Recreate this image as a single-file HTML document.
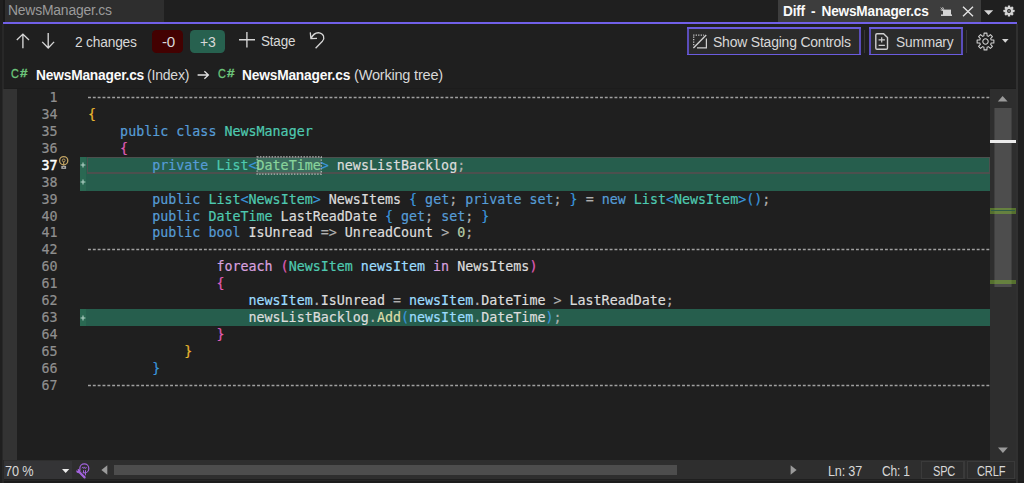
<!DOCTYPE html>
<html><head><meta charset="utf-8"><title>Diff - NewsManager.cs</title>
<style>
html,body{margin:0;padding:0;}
body{width:1024px;height:483px;overflow:hidden;background:#1f1f1f;position:relative;font-family:"Liberation Sans",sans-serif;color:#e6e6e6;}
.abs{position:absolute;}
svg{display:block;overflow:visible;}
.t{position:absolute;white-space:pre;line-height:1;}
.ui{font-family:"Liberation Sans",sans-serif;font-size:14px;color:#d8d8d8;letter-spacing:-0.2px;}
.b{font-weight:bold;}
.cs{color:#6cc47a;-webkit-text-stroke:0.3px;font-family:"Liberation Sans",sans-serif;}
.ln{position:absolute;left:0;width:990px;height:17px;font-family:"DejaVu Sans Mono","Liberation Mono",monospace;font-size:13.34px;line-height:17px;white-space:pre;color:#dcdcdc;-webkit-text-stroke:0.2px;}
.ln .n{position:absolute;left:20px;width:37.5px;text-align:right;color:#8f8f8f;}
.ln .n.cur{color:#ffffff;-webkit-text-stroke:0.45px #ffffff;}
.ln .c{position:absolute;left:88px;top:0;}
.k{color:#569cd6}.ty{color:#4ec9b0}.v{color:#9cdcfe}.ct{color:#d8a0df}.m{color:#dcdcaa}
.y{color:#e8b730}.mg{color:#e05cb8}.bl{color:#3a96dd}.num{color:#b5cea8}.op{color:#b0b0b0}
.sel{color:#88d49c}
.dash{position:absolute;left:88px;}
.btn{background:#5a4dba;}
.btn i{position:absolute;left:0;right:0;top:0;bottom:0;border-top:0;background:linear-gradient(#6b5ce0,#6b5ce0) top/100% 1.9px no-repeat,linear-gradient(#6b5ce0,#6b5ce0) bottom/100% 1.9px no-repeat;}
.btn b{position:absolute;left:1.9px;right:1.9px;top:1.9px;bottom:1.9px;background:#2b2b2b;}
</style></head><body>

<!-- window edges -->
<div class="abs" style="left:3px;top:0;width:1.8px;height:21.6px;background:#191919"></div>
<div class="abs" style="left:2.2px;top:24.2px;width:1.8px;height:459px;background:#282828"></div>

<!-- tab strip -->
<div class="abs" style="left:4.6px;top:0;width:159px;height:21.6px;background:#2e2e2e"></div>
<div class="t ui" id="t1" style="left:8.00px;top:2.50px;transform:scaleX(0.9927);transform-origin:0 0;color:#9b9b9b">NewsManager.cs</div>
<div class="abs" style="left:778px;top:0;width:203px;height:22px;background:#3d3d3d"></div>
<div class="t ui b" id="t2" style="left:783.00px;top:4.00px;transform:scaleX(0.9734);transform-origin:0 0;color:#fafafa;word-spacing:2.6px">Diff - NewsManager.cs</div>
<!-- pin -->
<svg class="abs" style="left:939px;top:5px" width="16" height="13" viewBox="0 0 16 13"><path d="M4 4.6H12V10H4Z" fill="#d6d6d6"/><path d="M2 10.2H13" stroke="#d6d6d6" stroke-width="1.5"/><path d="M1.8 2.6L4.6 5.6M3.6 2.2L4.8 4.6M1.6 4.8L4 5.6" stroke="#d6d6d6" stroke-width="0.9"/></svg>
<!-- close X -->
<svg class="abs" style="left:962px;top:6px" width="12" height="11" viewBox="0 0 12 11"><path d="M1 0.8L11 10.2M11 0.8L1 10.2" stroke="#e4e4e4" stroke-width="1.35" fill="none"/></svg>
<!-- tab dropdown -->
<svg class="abs" style="left:984px;top:10px" width="10" height="6" viewBox="0 0 10 6"><path d="M0 0.2H9.2L4.6 5Z" fill="#d4d4d4"/></svg>
<!-- tab gear (filled) -->
<svg class="abs" style="left:1003.3px;top:4.5px" width="12" height="12" viewBox="-6.5 -6.5 13 13"><g fill="#d4d4d4"><circle r="4.3"/><g id="tg"><rect x="-1.3" y="-6" width="2.6" height="12" rx="0.4"/><rect x="-1.3" y="-6" width="2.6" height="12" rx="0.4" transform="rotate(45)"/><rect x="-1.3" y="-6" width="2.6" height="12" rx="0.4" transform="rotate(90)"/><rect x="-1.3" y="-6" width="2.6" height="12" rx="0.4" transform="rotate(135)"/></g></g><circle r="2.1" fill="#1f1f1f"/><circle r="0.8" fill="#d4d4d4"/></svg>
<div class="abs" style="left:3.1px;top:21.5px;width:1013.5px;height:2.6px;background:#7160e8"></div>

<!-- toolbar left -->
<svg class="abs" style="left:14px;top:30px" width="44" height="22" viewBox="14 30 44 22"><g stroke="#d6d6d6" stroke-width="1.35" fill="none"><path d="M22.9 34.3V48.2M16.8 40.1L22.9 34.1L29 40.1"/><path d="M48.2 33V47.8M42.2 41.9L48.2 48L54.1 41.9"/></g></svg>
<div class="t ui" id="t3" style="left:75.00px;top:35.00px;transform:scaleX(0.9830);transform-origin:0 0;">2 changes</div>
<div class="abs" style="left:152px;top:30px;width:31px;height:23px;border-radius:4.5px;background:#430101"></div>
<div class="t ui" id="t4" style="left:162.00px;top:35.00px;transform:scaleX(1.0812);transform-origin:0 0;">-0</div>
<div class="abs" style="left:190px;top:30px;width:35px;height:23px;border-radius:4.5px;background:#27614f"></div>
<div class="t ui" id="t5" style="left:200.00px;top:35.00px;transform:scaleX(1.0000);transform-origin:0 0;">+3</div>
<svg class="abs" style="left:238px;top:31px" width="18" height="18" viewBox="238 31 18 18"><path d="M239 39.7H255M246.9 32V47.6" stroke="#d6d6d6" stroke-width="1.35" fill="none"/></svg>
<div class="t ui" id="t6" style="left:261.00px;top:34.00px;transform:scaleX(0.9624);transform-origin:0 0;">Stage</div>
<svg class="abs" style="left:308px;top:30px" width="20" height="20" viewBox="308 30 20 20"><path d="M310.3 32.4L310.9 38.7L317 38.3M310.9 38.7C312.6 35 316 32.4 319.3 32.8C323.6 33.4 325.2 37.8 322.4 41.2L315.6 48.2" stroke="#d6d6d6" stroke-width="1.3" fill="none" stroke-linejoin="round"/></svg>

<!-- toolbar right -->
<div class="abs btn" style="left:687.2px;top:27.1px;width:173.8px;height:28.4px"><i></i><b></b></div>
<svg class="abs" style="left:692px;top:33px" width="16" height="16" viewBox="692 33 16 16"><g stroke="#d0d0d0" fill="none"><path d="M693.4 48L706.2 35" stroke-width="1.35"/><path d="M706.4 38.4V47.8H697" stroke-width="1.2"/><path d="M693.2 35.2H704" stroke-width="1.2" stroke-dasharray="1.2 1.3"/><path d="M693.7 36.5V45.5" stroke-width="1.2" stroke-dasharray="1.2 1.3"/></g></svg>
<div class="t ui" id="t7" style="left:713.00px;top:35.00px;transform:scaleX(0.9967);transform-origin:0 0;">Show Staging Controls</div>
<div class="abs" style="left:863.5px;top:29.8px;width:1.8px;height:23.4px;background:#383838"></div>
<div class="abs btn" style="left:869.2px;top:27.1px;width:93.5px;height:28.4px"><i></i><b></b></div>
<svg class="abs" style="left:874px;top:32px" width="16" height="19" viewBox="874 32 16 19"><g stroke="#cfcfcf" fill="none"><path d="M877 33.7H883.6L887.5 37.6V48A1.2 1.2 0 0 1 886.3 49.2H877A1.2 1.2 0 0 1 875.8 48V34.9A1.2 1.2 0 0 1 877 33.7Z" stroke-width="1.4"/><path d="M878.6 39.9H884.9M881.7 37.2V42.6M878.6 45.4H884.9" stroke-width="1.2"/></g></svg>
<div class="t ui" id="t8" style="left:896.00px;top:35.00px;transform:scaleX(0.9818);transform-origin:0 0;">Summary</div>
<div class="abs" style="left:965.7px;top:29.8px;width:1.8px;height:23.4px;background:#383838"></div>
<!-- gear outline -->
<svg class="abs" style="left:976px;top:32px" width="19" height="19" viewBox="-9.5 -9.5 19 19"><path d="M-1.57 -5.69L-1.44 -8.38L1.44 -8.38L1.57 -5.69L2.91 -5.13L4.91 -6.94L6.94 -4.91L5.13 -2.91L5.69 -1.57L8.38 -1.44L8.38 1.44L5.69 1.57L5.13 2.91L6.94 4.91L4.91 6.94L2.91 5.13L1.57 5.69L1.44 8.38L-1.44 8.38L-1.57 5.69L-2.91 5.13L-4.91 6.94L-6.94 4.91L-5.13 2.91L-5.69 1.57L-8.38 1.44L-8.38 -1.44L-5.69 -1.57L-5.13 -2.91L-6.94 -4.91L-4.91 -6.94L-2.91 -5.13Z" stroke="#d0d0d0" stroke-width="1.05" fill="none" stroke-linejoin="round"/><circle r="2.7" stroke="#d0d0d0" stroke-width="1.05" fill="none"/></svg>
<svg class="abs" style="left:1002px;top:39.4px" width="7" height="4" viewBox="0 0 7 4"><path d="M0 0H6.6L3.3 3.8Z" fill="#d4d4d4"/></svg>

<!-- file header -->
<div class="t b cs" style="left:10.6px;top:67.2px;font-weight:normal;font-size:13.6px;transform:scaleX(0.8);transform-origin:0 0">C</div>
<div class="t b cs" style="left:20.4px;top:67.6px;font-size:10.6px;transform:scaleX(1.28);transform-origin:0 0">#</div>
<div class="t ui b" id="t9" style="left:36.00px;top:68.00px;transform:scaleX(0.9821);transform-origin:0 0;color:#fafafa">NewsManager.cs</div>
<div class="t ui" id="t10" style="left:147.00px;top:68.00px;transform:scaleX(1.0006);transform-origin:0 0;">(Index)</div>
<svg class="abs" style="left:197px;top:70px" width="13" height="10" viewBox="0 0 13 10"><path d="M0.6 5H11.4M7.4 1.2L11.4 5L7.4 8.8" stroke="#e2e2e2" stroke-width="1.3" fill="none"/></svg>
<div class="t b cs" style="left:217.6px;top:67.2px;font-weight:normal;font-size:13.6px;transform:scaleX(0.8);transform-origin:0 0">C</div>
<div class="t b cs" style="left:227.4px;top:67.6px;font-size:10.6px;transform:scaleX(1.28);transform-origin:0 0">#</div>
<div class="t ui b" id="t11" style="left:242.00px;top:68.00px;transform:scaleX(0.9825);transform-origin:0 0;color:#fafafa">NewsManager.cs</div>
<div class="t ui" id="t12" style="left:354.00px;top:68.00px;transform:scaleX(1.0388);transform-origin:0 0;">(Working tree)</div>

<!-- editor -->
<div class="abs" style="left:4px;top:87.6px;width:1012px;height:1.1px;background:#1c1c1c"></div>
<div class="abs" style="left:2.6px;top:88.7px;width:14.5px;height:371.7px;background:#333333"></div>
<div class="abs" style="left:80.3px;top:156.78px;width:909.7px;height:17.02px;background:#265e4d"></div>
<div class="abs" style="left:80.3px;top:156.78px;width:6.2px;height:17.02px;background:#2a6852"></div>
<div class="abs" style="left:80.3px;top:173.70px;width:909.7px;height:17.02px;background:#265e4d"></div>
<div class="abs" style="left:80.3px;top:173.70px;width:6.2px;height:17.02px;background:#2a6852"></div>
<div class="abs" style="left:80.3px;top:309.06px;width:909.7px;height:17.02px;background:#265e4d"></div>
<div class="abs" style="left:80.3px;top:309.06px;width:6.2px;height:17.02px;background:#2a6852"></div>
<div class="abs" style="left:86.5px;top:156.78px;width:903.5px;height:17.02px;background:#4c504e"></div>
<div class="abs" style="left:88px;top:158.18px;width:900.6px;height:14.22px;background:#265e4d"></div>
<svg class="abs" style="left:256px;top:156.18px" width="67" height="19"><rect x="1.1" y="0.9" width="64.2" height="17.22" fill="rgba(200,215,205,0.13)" stroke="#b4b8b6" stroke-width="1.25" stroke-dasharray="1.45 1.45"/></svg>
<div class="ln" style="top:89px"><span class="n">1</span>
<svg class="dash" style="top:6.90px" width="902" height="3"><line x1="0" y1="1.5" x2="902" y2="1.5" stroke="#a0a0a0" stroke-width="1.4" stroke-dasharray="2.9 1.93"/></svg>
</div>
<div class="ln" style="top:106px"><span class="n">34</span>
<span class="c"><span class="y">{</span></span>
</div>
<div class="ln" style="top:123px"><span class="n">35</span>
<span class="c">    <span class="k">public</span> <span class="k">class</span> <span class="ty">NewsManager</span></span>
</div>
<div class="ln" style="top:140px"><span class="n">36</span>
<span class="c">    <span class="mg">{</span></span>
</div>
<div class="ln" style="top:157px"><span class="n cur">37</span>
<span class="c">        <span class="k">private</span> <span class="ty">List</span><span class="bl">&lt;</span><span class="sel">DateTime</span><span class="bl">&gt;</span> newsListBacklog<span class="op">;</span></span>
<svg class="abs" style="left:80.4px;top:5.48px" width="6" height="6"><path d="M3 0.6V5.4M0.6 3H5.4" stroke="#b4d4c8" stroke-width="1.1" fill="none"/></svg>
</div>
<div class="ln" style="top:174px"><span class="n">38</span>
<svg class="abs" style="left:80.4px;top:5.40px" width="6" height="6"><path d="M3 0.6V5.4M0.6 3H5.4" stroke="#b4d4c8" stroke-width="1.1" fill="none"/></svg>
</div>
<div class="ln" style="top:191px"><span class="n">39</span>
<span class="c">        <span class="k">public</span> <span class="ty">List</span><span class="bl">&lt;</span><span class="ty">NewsItem</span><span class="bl">&gt;</span> NewsItems <span class="bl">{</span> <span class="k">get</span><span class="op">;</span> <span class="k">private</span> <span class="k">set</span><span class="op">;</span> <span class="bl">}</span> <span class="op">=</span> <span class="k">new</span> <span class="ty">List</span><span class="bl">&lt;</span><span class="ty">NewsItem</span><span class="bl">&gt;()</span><span class="op">;</span></span>
</div>
<div class="ln" style="top:208px"><span class="n">40</span>
<span class="c">        <span class="k">public</span> <span class="ty">DateTime</span> LastReadDate <span class="bl">{</span> <span class="k">get</span><span class="op">;</span> <span class="k">set</span><span class="op">;</span> <span class="bl">}</span></span>
</div>
<div class="ln" style="top:224px"><span class="n">41</span>
<span class="c">        <span class="k">public</span> <span class="k">bool</span> IsUnread <span class="op">=&gt;</span> UnreadCount <span class="op">&gt;</span> <span class="num">0</span><span class="op">;</span></span>
</div>
<div class="ln" style="top:241px"><span class="n">42</span>
<svg class="dash" style="top:7.18px" width="902" height="3"><line x1="0" y1="1.5" x2="902" y2="1.5" stroke="#a0a0a0" stroke-width="1.4" stroke-dasharray="2.9 1.93"/></svg>
</div>
<div class="ln" style="top:258px"><span class="n">60</span>
<span class="c">                <span class="ct">foreach</span> <span class="mg">(</span><span class="ty">NewsItem</span> <span class="v">newsItem</span> <span class="ct">in</span> NewsItems<span class="mg">)</span></span>
</div>
<div class="ln" style="top:275px"><span class="n">61</span>
<span class="c">                <span class="mg">{</span></span>
</div>
<div class="ln" style="top:292px"><span class="n">62</span>
<span class="c">                    <span class="v">newsItem</span><span class="op">.</span>IsUnread <span class="op">=</span> <span class="v">newsItem</span><span class="op">.</span>DateTime <span class="op">&gt;</span> LastReadDate<span class="op">;</span></span>
</div>
<div class="ln" style="top:309px"><span class="n">63</span>
<span class="c">                    newsListBacklog<span class="op">.</span><span class="m">Add</span><span class="bl">(</span><span class="v">newsItem</span><span class="op">.</span>DateTime<span class="bl">)</span><span class="op">;</span></span>
<svg class="abs" style="left:80.4px;top:5.76px" width="6" height="6"><path d="M3 0.6V5.4M0.6 3H5.4" stroke="#b4d4c8" stroke-width="1.1" fill="none"/></svg>
</div>
<div class="ln" style="top:326px"><span class="n">64</span>
<span class="c">                <span class="mg">}</span></span>
</div>
<div class="ln" style="top:343px"><span class="n">65</span>
<span class="c">            <span class="y">}</span></span>
</div>
<div class="ln" style="top:360px"><span class="n">66</span>
<span class="c">        <span class="bl">}</span></span>
</div>
<div class="ln" style="top:377px"><span class="n">67</span>
<svg class="dash" style="top:6.54px" width="902" height="3"><line x1="0" y1="1.5" x2="902" y2="1.5" stroke="#a0a0a0" stroke-width="1.4" stroke-dasharray="2.9 1.93"/></svg>
</div>
<!-- lightbulb -->
<svg class="abs" style="left:58px;top:155px" width="12" height="15" viewBox="58 155 12 15"><circle cx="63.7" cy="160.7" r="4.1" stroke="#c4a564" stroke-width="1.3" fill="none"/><circle cx="63.7" cy="160.4" r="1.4" stroke="#c4a564" stroke-width="0.9" fill="none"/><path d="M63.7 161.8V165.6" stroke="#c4a564" stroke-width="1.1"/><rect x="61.3" y="165.9" width="4.8" height="3" fill="#a8a8a8"/><rect x="62.9" y="166.9" width="1.6" height="1.1" fill="#4a4a4a"/></svg>

<!-- vertical scrollbar -->
<div class="abs" style="left:990px;top:88.8px;width:26.4px;height:371.6px;background:#2e2e2e"></div>
<svg class="abs" style="left:997px;top:95px" width="12" height="7" viewBox="0 0 12 7"><path d="M0.8 6.6L5.6 1L10.6 6.6Z" fill="#9a9a9a"/></svg>
<div class="abs" style="left:994.2px;top:108.3px;width:17.6px;height:179.2px;background:#3f3f3f"></div>
<div class="abs" style="left:995.2px;top:108.3px;width:15.6px;height:179.2px;background:#4d4d4d"></div>
<div class="abs" style="left:990px;top:140.2px;width:26.6px;height:2.8px;background:#ececec"></div>
<div class="abs" style="left:990px;top:207.8px;width:26.9px;height:6px;background:rgba(133,193,46,0.45)"></div>
<div class="abs" style="left:991.2px;top:209.9px;width:24px;height:1.4px;background:#2f5b47"></div>
<div class="abs" style="left:990px;top:280.1px;width:26.9px;height:3.7px;background:rgba(133,193,46,0.45)"></div>
<svg class="abs" style="left:997px;top:447px" width="12" height="7" viewBox="0 0 12 7"><path d="M1 0.6H10.8L5.9 6Z" fill="#9a9a9a"/></svg>

<!-- bottom bar -->
<div class="abs" style="left:4px;top:460.4px;width:1012.2px;height:19.1px;background:#2e2e2e"></div>
<div class="abs" style="left:4px;top:461px;width:67.6px;height:18px;background:#343436"></div>
<div class="t ui" id="t13" style="left:5.00px;top:463.50px;transform:scaleX(0.9084);transform-origin:0 0;">70 %</div>
<svg class="abs" style="left:61.8px;top:468.8px" width="8" height="4" viewBox="0 0 8 4"><path d="M0 0H7.3L3.65 3.9Z" fill="#ececec"/></svg>
<!-- purple bulb+wrench -->
<svg class="abs" style="left:75px;top:462px" width="17" height="18" viewBox="75 462 17 18"><g stroke="#a263dc" fill="none"><circle cx="84.3" cy="468.4" r="4.5" stroke-width="1.2"/><path d="M81.9 468.2L82.9 466.9L83.8 468.6L84.7 466.9L85.6 468.6L86.6 467.2" stroke-width="0.8"/><path d="M83.5 470.2V475.4M85.5 470.2V476.6" stroke-width="1"/><path d="M78.6 471.4L84.8 477.6" stroke="#2e2e2e" stroke-width="4.2" stroke-linecap="round"/><path d="M79 471.8L84.6 477.4" stroke-width="2.2" stroke-linecap="round"/><circle cx="78.3" cy="471.1" r="2.1" fill="#a263dc" stroke="none"/><path d="M74.6 469.4L78 470.9L77 467" fill="#2e2e2e" stroke="none"/></g></svg>
<svg class="abs" style="left:101px;top:465px" width="7" height="10" viewBox="0 0 7 10"><path d="M6.3 0.2V9.8L0.4 5Z" fill="#9a9a9a"/></svg>
<div class="abs" style="left:114px;top:464.8px;width:562.8px;height:10.6px;background:#4d4d4d"></div>
<svg class="abs" style="left:790px;top:465px" width="7" height="10" viewBox="0 0 7 10"><path d="M0.6 0.2V9.8L6.6 5Z" fill="#9a9a9a"/></svg>
<div class="t ui" id="t14" style="left:828.00px;top:463.50px;transform:scaleX(0.9022);transform-origin:0 0;">Ln: 37</div>
<div class="t ui" id="t15" style="left:882.00px;top:463.50px;transform:scaleX(0.8561);transform-origin:0 0;">Ch: 1</div>
<div class="abs" style="left:921px;top:461px;width:43.5px;height:18px;background:#3a3a3a"></div><div class="abs" style="left:922.1px;top:462.1px;width:41.3px;height:15.8px;background:#2d2d2d"></div>
<div class="t ui" id="t16" style="left:933.00px;top:463.50px;transform:scaleX(0.7854);transform-origin:0 0;">SPC</div>
<div class="abs" style="left:966.6px;top:461px;width:48.8px;height:18px;background:#3a3a3a"></div><div class="abs" style="left:967.7px;top:462.1px;width:46.6px;height:15.8px;background:#2d2d2d"></div>
<div class="t ui" id="t17" style="left:977.00px;top:463.50px;transform:scaleX(0.7914);transform-origin:0 0;">CRLF</div>
<div class="abs" style="left:4px;top:479.5px;width:1012.2px;height:1px;background:#262626"></div>
<div class="abs" style="left:4px;top:480.5px;width:1020px;height:2.5px;background:#1c1c1c"></div>

<div class="abs" style="left:1016.2px;top:24.2px;width:1.5px;height:459px;background:#303030"></div>
</body></html>
